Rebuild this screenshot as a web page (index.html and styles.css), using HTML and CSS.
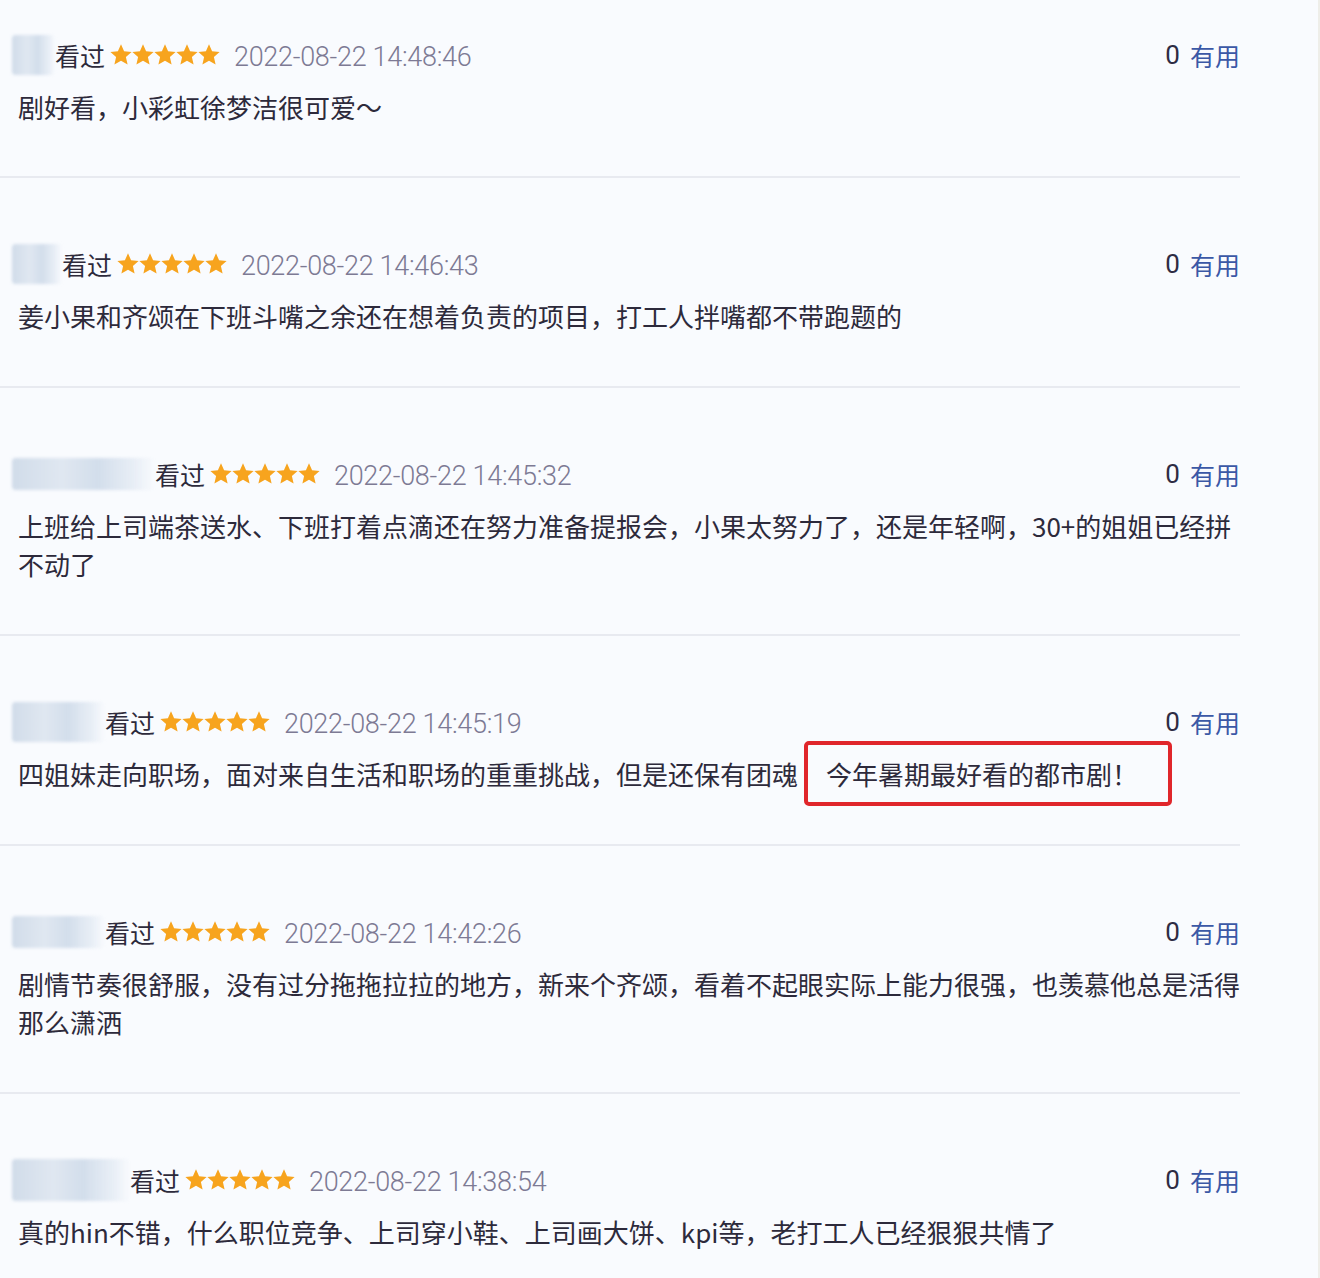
FILE: index.html
```html
<!DOCTYPE html>
<html lang="zh-CN">
<head>
<meta charset="utf-8">
<title>短评</title>
<link rel="stylesheet" href="styles.css">
</head>
<body>
<svg class="defs" width="0" height="0" aria-hidden="true">
  <defs>
    <polygon id="star" points="11,0.3 14.1,7.3 21.6,8.1 15.9,13.1 17.6,20.6 11,16.7 4.4,20.6 6.1,13.1 0.4,8.1 7.9,7.3"/>
  </defs>
</svg>
<div class="page">
  <div class="list">
    <div class="comment comment-first">
      <div class="meta">
        <div class="meta-left">
          <span class="name name-1"></span>
          <span class="status">看过</span>
          <svg class="stars" viewBox="0 0 110 22"><use href="#star" x="0"/><use href="#star" x="22"/><use href="#star" x="44"/><use href="#star" x="66"/><use href="#star" x="88"/></svg>
          <span class="time">2022-08-22 14:48:46</span>
        </div>
        <div class="votes"><span class="count">0</span><span class="useful">有用</span></div>
      </div>
      <p class="text">剧好看，小彩虹徐梦洁很可爱～</p>
    </div>

    <div class="comment">
      <div class="meta">
        <div class="meta-left">
          <span class="name name-2"></span>
          <span class="status">看过</span>
          <svg class="stars" viewBox="0 0 110 22"><use href="#star" x="0"/><use href="#star" x="22"/><use href="#star" x="44"/><use href="#star" x="66"/><use href="#star" x="88"/></svg>
          <span class="time">2022-08-22 14:46:43</span>
        </div>
        <div class="votes"><span class="count">0</span><span class="useful">有用</span></div>
      </div>
      <p class="text">姜小果和齐颂在下班斗嘴之余还在想着负责的项目，打工人拌嘴都不带跑题的</p>
    </div>

    <div class="comment">
      <div class="meta">
        <div class="meta-left">
          <span class="name name-3"></span>
          <span class="status">看过</span>
          <svg class="stars" viewBox="0 0 110 22"><use href="#star" x="0"/><use href="#star" x="22"/><use href="#star" x="44"/><use href="#star" x="66"/><use href="#star" x="88"/></svg>
          <span class="time">2022-08-22 14:45:32</span>
        </div>
        <div class="votes"><span class="count">0</span><span class="useful">有用</span></div>
      </div>
      <p class="text">上班给上司端茶送水、下班打着点滴还在努力准备提报会，小果太努力了，还是年轻啊，30+的姐姐已经拼不动了</p>
    </div>

    <div class="comment">
      <div class="meta">
        <div class="meta-left">
          <span class="name name-4"></span>
          <span class="status">看过</span>
          <svg class="stars" viewBox="0 0 110 22"><use href="#star" x="0"/><use href="#star" x="22"/><use href="#star" x="44"/><use href="#star" x="66"/><use href="#star" x="88"/></svg>
          <span class="time">2022-08-22 14:45:19</span>
        </div>
        <div class="votes"><span class="count">0</span><span class="useful">有用</span></div>
      </div>
      <p class="text">四姐妹走向职场，面对来自生活和职场的重重挑战，但是还保有团魂<span class="mark">今年暑期最好看的都市剧！</span></p>
    </div>

    <div class="comment">
      <div class="meta">
        <div class="meta-left">
          <span class="name name-5"></span>
          <span class="status">看过</span>
          <svg class="stars" viewBox="0 0 110 22"><use href="#star" x="0"/><use href="#star" x="22"/><use href="#star" x="44"/><use href="#star" x="66"/><use href="#star" x="88"/></svg>
          <span class="time">2022-08-22 14:42:26</span>
        </div>
        <div class="votes"><span class="count">0</span><span class="useful">有用</span></div>
      </div>
      <p class="text">剧情节奏很舒服，没有过分拖拖拉拉的地方，新来个齐颂，看着不起眼实际上能力很强，也羡慕他总是活得那么潇洒</p>
    </div>

    <div class="comment comment-last">
      <div class="meta">
        <div class="meta-left">
          <span class="name name-6"></span>
          <span class="status">看过</span>
          <svg class="stars" viewBox="0 0 110 22"><use href="#star" x="0"/><use href="#star" x="22"/><use href="#star" x="44"/><use href="#star" x="66"/><use href="#star" x="88"/></svg>
          <span class="time">2022-08-22 14:38:54</span>
        </div>
        <div class="votes"><span class="count">0</span><span class="useful">有用</span></div>
      </div>
      <p class="text">真的hin不错，什么职位竞争、上司穿小鞋、上司画大饼、kpi等，老打工人已经狠狠共情了</p>
    </div>
  </div>
</div>
</body>
</html>
```

FILE: styles.css
```css
html, body {
  margin: 0;
  padding: 0;
  background: #f9fbfe;
}

body {
  font-family: "Noto Sans CJK SC", "Noto Sans", sans-serif;
  color: #2d2a3b;
}

.defs {
  position: absolute;
  width: 0;
  height: 0;
  overflow: hidden;
}

.page {
  width: 1318px;
  min-height: 1278px;
  border-right: 2px solid #eeeee9;
  background: #f9fbfe;
}

.list {
  width: 1242px;
}

.comment {
  padding: 66px 0 51px;
  border-bottom: 2px solid #e8eaf0;
  margin-right: 2px;
}

.comment-first {
  padding-top: 35px;
  padding-bottom: 50px;
}

.comment-last {
  padding-bottom: 0;
  border-bottom: none;
}

.meta {
  height: 40px;
  display: flex;
  align-items: center;
  justify-content: space-between;
  padding-left: 12px;
}

.meta-left {
  display: flex;
  align-items: center;
  height: 40px;
}

.name {
  display: block;
  height: 40px;
  border-radius: 4px;
  filter: blur(1.5px);
  background:
    linear-gradient(90deg, rgba(206, 218, 232, 0.95) 0, rgba(222, 230, 240, 0.95) 35%, rgba(208, 220, 234, 0.95) 60%, rgba(228, 235, 244, 0.85) 85%, rgba(249, 251, 254, 0) 100%);
}

.name-1 { width: 43px; }
.name-2 { width: 50px; }
.name-3 { width: 143px; height: 32px; }
.name-4 { width: 93px; }
.name-5 { width: 93px; height: 32px; }
.name-6 { width: 118px; height: 42px; }

.status {
  font-size: 25px;
  line-height: 40px;
  color: #2d2a3b;
}

.stars {
  width: 110px;
  height: 22px;
  margin-left: 5px;
  fill: #f7a41e;
}

.time {
  margin-left: 14px;
  font-family: Roboto, "Liberation Sans", sans-serif;
  font-size: 27px;
  font-weight: 300;
  letter-spacing: -0.3px;
  line-height: 40px;
  color: #7d7a94;
  position: relative;
  top: 2px;
}

.votes {
  display: flex;
  align-items: center;
  gap: 10px;
  line-height: 40px;
}

.count {
  font-family: Roboto, "Liberation Sans", sans-serif;
  font-size: 26px;
  color: #2e2c44;
}

.useful {
  font-size: 25px;
  color: #3b58a6;
}

.text {
  margin: 13px 0 0;
  padding-left: 18px;
  width: 1224px;
  font-size: 26px;
  line-height: 38px;
  color: #2d2a3b;
}

.mark {
  margin-left: 6px;
  padding: 10px 30px 10px 18px;
  border: 4px solid #e0262b;
  border-radius: 5px;
}
```
